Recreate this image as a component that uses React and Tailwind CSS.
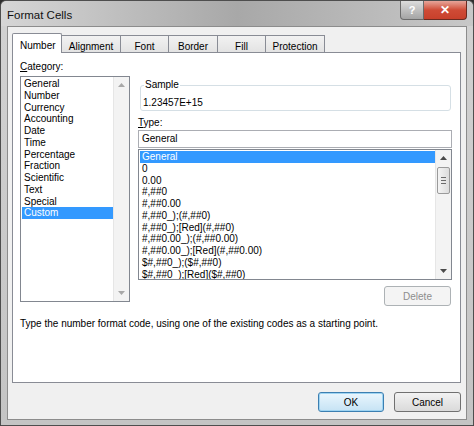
import React from "react";

const categories = [
  "General",
  "Number",
  "Currency",
  "Accounting",
  "Date",
  "Time",
  "Percentage",
  "Fraction",
  "Scientific",
  "Text",
  "Special",
  "Custom",
];

const formats = [
  "General",
  "0",
  "0.00",
  "#,##0",
  "#,##0.00",
  "#,##0_);(#,##0)",
  "#,##0_);[Red](#,##0)",
  "#,##0.00_);(#,##0.00)",
  "#,##0.00_);[Red](#,##0.00)",
  "$#,##0_);($#,##0)",
  "$#,##0_);[Red]($#,##0)",
];

const tabs = ["Number", "Alignment", "Font", "Border", "Fill", "Protection"];

// little scroll arrow
const Arrow = ({ up, disabled }) => (
  <svg width="7" height="4" viewBox="0 0 7 4">
    <path
      d={up ? "M0 4 L3.5 0 L7 4 Z" : "M0 0 L3.5 4 L7 0 Z"}
      fill={disabled ? "#a8a8a8" : "#4a4a4a"}
    />
  </svg>
);

const ListBox = ({ items, selected, height, withThumb }) => (
  <div className={`flex border border-[#828790] bg-white ${height}`}>
    <div className="flex-1 pl-[1px] pt-[1px] overflow-hidden">
      {items.map((item) => (
        <div
          key={item}
          className={`h-[11.75px] leading-[11.75px] pl-[2px] whitespace-nowrap ${
            item === selected ? "bg-[#3399ff] text-white" : "text-black"
          }`}
        >
          {item}
        </div>
      ))}
    </div>
    <div className="w-[16px] flex flex-col items-center bg-[#f3f3f3] border-l border-[#e6e6e6]">
      <div className="h-[16px] flex items-center justify-center">
        <Arrow up disabled={!withThumb} />
      </div>
      {withThumb && (
        <div className="mt-[1px] w-[13px] h-[27px] rounded-[2px] border border-[#9a9a9a] bg-gradient-to-r from-[#f4f4f4] to-[#dcdcdc] flex flex-col items-center justify-center gap-[2px]">
          <div className="w-[5px] h-[1px] bg-[#6a6a6a]" />
          <div className="w-[5px] h-[1px] bg-[#6a6a6a]" />
          <div className="w-[5px] h-[1px] bg-[#6a6a6a]" />
        </div>
      )}
      <div className="flex-1" />
      <div className="h-[16px] flex items-center justify-center">
        <Arrow disabled={!withThumb} />
      </div>
    </div>
  </div>
);

const App = () => {
  return (
    <div className="w-[474px] h-[426px] bg-[#2e2e2e] font-['Liberation_Sans',Arial,sans-serif] text-[10px] text-black">
      <div className="w-full h-full flex flex-col rounded-t-[6px] border border-[#4e4e4e] bg-gradient-to-b from-[#d2d2d2] to-[#c4c4c4]">
        {/* title bar */}
        <div className="h-[25px] flex bg-gradient-to-r from-[#d6d6d6] via-[#a8a8a8] to-[#c8c8c8] rounded-t-[6px]">
          <div className="flex-1 pl-[6px] pt-[6px] text-[11.5px] text-[#111]">Format Cells</div>
          <div className="flex mr-[6px] h-[19px]">
            <div className="w-[24px] h-full flex items-center justify-center rounded-bl-[4px] border border-t-0 border-[#6b6b6b] bg-gradient-to-b from-[#dcdcdc] to-[#a4a4a4] text-[11px] font-bold text-white">
              ?
            </div>
            <div className="w-[43px] h-full flex items-center justify-center rounded-br-[4px] border border-t-0 border-l-0 border-[#6b2a20] bg-gradient-to-b from-[#e6a59a] via-[#cf4b36] to-[#c8402b] text-[12px] font-bold text-white">
              ✕
            </div>
          </div>
        </div>

        {/* client area */}
        <div className="mx-[6px] mb-[5px] flex-1 flex flex-col border border-[#8c8c8c] bg-[#f0f0f0]">
          {/* tabs */}
          <div className="flex items-end pl-[4px] pt-[5px] h-[25px]">
            {tabs.map((tab, i) =>
              i === 0 ? (
                <div
                  key={tab}
                  className="relative z-10 w-[50px] h-[20px] -mb-[1px] pt-[4px] pl-[7px] bg-white border border-b-0 border-[#898c95] rounded-t-[2px]"
                >
                  {tab}
                </div>
              ) : (
                <div
                  key={tab}
                  className={`h-[17px] pt-[3px] text-center bg-gradient-to-b from-[#f2f2f2] to-[#e3e3e3] border border-b-0 border-l-0 border-[#898c95] ${
                    ["", "w-[59px]", "w-[48px]", "w-[49px]", "w-[48px]", "w-[59px]"][i]
                  }`}
                >
                  {tab}
                </div>
              )
            )}
          </div>

          {/* tab panel */}
          <div className="ml-[4px] mr-[5px] h-[331px] border border-[#898c95] bg-white pl-[7px] pt-[8px]">
            <div className="flex">
              {/* category column */}
              <div className="w-[110px] flex flex-col">
                <div className="h-[12px] leading-[12px]">
                  <u>C</u>ategory:
                </div>
                <div className="mt-[3px]">
                  <ListBox items={categories} selected="Custom" height="h-[226px]" />
                </div>
              </div>

              {/* type column */}
              <div className="ml-[8px] w-[314px] flex flex-col pt-[18px]">
                <fieldset className="ml-[2px] w-[311px] border border-[#d5dfe5] rounded-[3px] pl-[2px] pt-[6px] pb-[1px]">
                  <legend className="ml-[1px] px-[1px] leading-[12px]">Sample</legend>
                  <div className="leading-[12px]">1.23457E+15</div>
                </fieldset>
                <div className="mt-[6px] h-[12px] leading-[12px]">
                  <u>T</u>ype:
                </div>
                <div className="mt-[1px] h-[18px] border border-[#abadb3] pl-[3px] leading-[16px]">
                  General
                </div>
                <div className="mt-[1px]">
                  <ListBox items={formats} selected="General" height="h-[131px]" withThumb />
                </div>
                <div className="mt-[6px] self-end mr-[1px] w-[67px] h-[20px] flex items-center justify-center rounded-[3px] border border-[#adb2b5] bg-[#f4f4f4] text-[#8d8d8d]">
                  Delete
                </div>
              </div>
            </div>
            <div className="mt-[12px] leading-[12px]">
              Type the number format code, using one of the existing codes as a starting point.
            </div>
          </div>

          {/* dialog buttons */}
          <div className="flex justify-end gap-[10px] mt-[9px] mr-[5px]">
            <div className="w-[66px] h-[20px] flex items-center justify-center rounded-[3px] border border-[#3c7fb1] bg-gradient-to-b from-[#eaf6fd] to-[#c6e3f4] shadow-[inset_0_0_0_1px_#9ed4f2]">
              OK
            </div>
            <div className="w-[67px] h-[20px] flex items-center justify-center rounded-[3px] border border-[#707070] bg-gradient-to-b from-[#f2f2f2] to-[#dadada]">
              Cancel
            </div>
          </div>
        </div>
      </div>
    </div>
  );
};

export default App;
